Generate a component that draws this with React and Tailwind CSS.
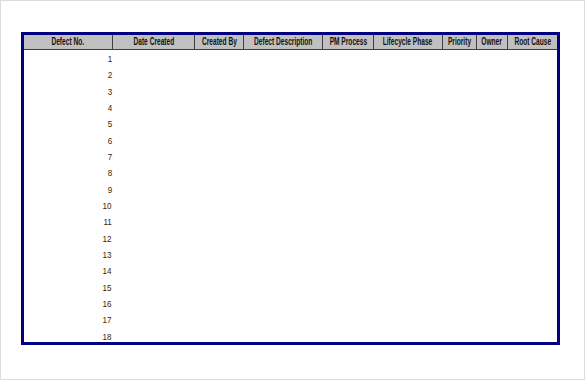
import React from "react";

const columns = [
  { label: "Defect No.", w: "w-[89px]" },
  { label: "Date Created", w: "w-[82px]" },
  { label: "Created By", w: "w-[49px]" },
  { label: "Defect Description", w: "w-[79px]" },
  { label: "PM Process", w: "w-[51px]" },
  { label: "Lifecycle Phase", w: "w-[69px]" },
  { label: "Priority", w: "w-[34px]" },
  { label: "Owner", w: "w-[31px]" },
  { label: "Root Cause", w: "w-[49px]" },
];

const rows = Array.from({ length: 18 }, (_, i) => i + 1);

export default function App() {
  return (
    <div
      className="w-[585px] h-[380px] bg-white border border-[#dcdcdc] pt-[31px] pl-[20px]"
      style={{ fontFamily: '"Liberation Sans", Arial, sans-serif' }}
    >
      {/* sheet */}
      <div className="w-[539px] h-[313px] border-[3px] border-[#000080] overflow-hidden">
        {/* header */}
        <div className="flex h-[15px] bg-[#c0c0c0] border-b border-[#404040]">
          {columns.map((c, i) => (
            <div
              key={c.label}
              className={`${c.w} shrink-0 flex items-center justify-center ${
                i < columns.length - 1 ? "border-r border-[#404040]" : ""
              }`}
            >
              <span className="inline-block whitespace-nowrap text-[10px] font-bold text-[#111] leading-none scale-x-[0.66]">
                {c.label}
              </span>
            </div>
          ))}
        </div>

        {/* body */}
        <div className="-mt-px">
          {rows.map((n) => (
            <div key={n} className="flex h-[16.33px] items-center">
              <div className="w-[89px] pr-[1px] text-right leading-none">
                <span className="inline-block text-[9.5px] text-[#3a2508] scale-x-[0.85] origin-right">
                  {n}
                </span>
              </div>
            </div>
          ))}
        </div>
      </div>
    </div>
  );
}
